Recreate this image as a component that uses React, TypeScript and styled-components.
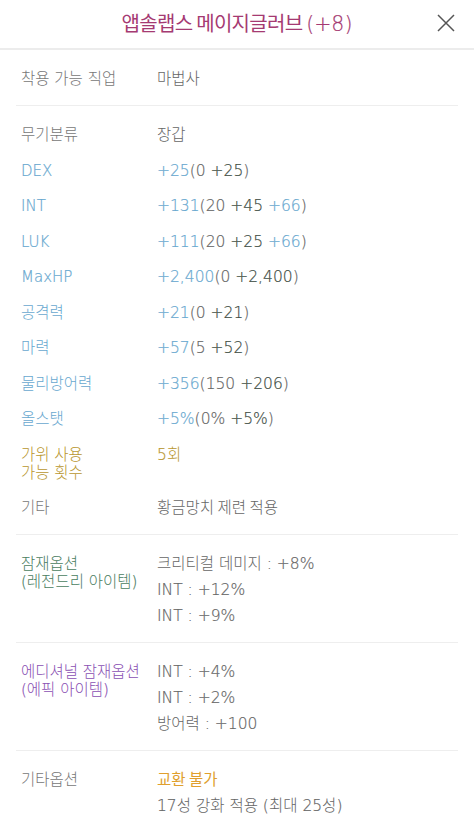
import React from "react";
import styled, { createGlobalStyle } from "styled-components";

const Global = createGlobalStyle`
  html, body { margin: 0; padding: 0; background: #fff; }
  body { font-family: "Noto Sans CJK KR", "Noto Sans", sans-serif; -webkit-font-smoothing: antialiased; }
`;

const Page = styled.div`
  width: 474px;
  height: 825px;
  overflow: hidden;
  background: #fff;
`;

const Header = styled.header`
  height: 48px;
  border-bottom: 2px solid #ececec;
  display: flex;
  align-items: center;
  justify-content: center;
  position: relative;
`;

const Title = styled.h1`
  margin: 0 0 2px 0;
  font-size: 20px;
  line-height: 24px;
  font-weight: 400;
  color: #a53a72;
  letter-spacing: -0.7px;
  white-space: nowrap;
`;

const Close = styled.button`
  position: absolute;
  right: 16px;
  top: 11px;
  width: 24px;
  height: 24px;
  padding: 0;
  border: 0;
  background: none;
  display: flex;
  align-items: center;
  justify-content: center;
`;

const Section = styled.section<{ $last?: boolean }>`
  margin: 0 16px;
  padding: 18px 0 19px 5px;
  border-bottom: ${(p) => (p.$last ? "none" : "1px solid #eeeeee")};
  display: flex;
  flex-direction: column;
  gap: 17.5px;
`;

const Row = styled.div`
  display: grid;
  grid-template-columns: 136px 1fr;
  align-items: start;
  font-size: 15.5px;
  font-weight: 300;
  line-height: 18px;
  letter-spacing: 0;
  white-space: nowrap;
`;

type Tone = "gray" | "blue" | "gold" | "green" | "purple";
const toneColor: Record<Tone, string> = {
  gray: "#777777",
  blue: "#68a8cf",
  gold: "#b8962e",
  green: "#4a7d5f",
  purple: "#8a50b3",
};

const Label = styled.div<{ $tone: Tone }>`
  display: flex;
  flex-direction: column;
  color: ${(p) => toneColor[p.$tone]};
`;

const Line = styled.div`
  height: 18px;
  overflow: visible;
`;

const Values = styled.div`
  display: flex;
  flex-direction: column;
  gap: 8px;
  color: #666666;
`;

const Value = styled.div<{ $color?: string; $strong?: boolean }>`
  height: 18px;
  color: ${(p) => p.$color || "#666666"};
  font-weight: ${(p) => (p.$strong ? 400 : 300)};
`;

/* Latin run: wide, thin geometric-looking latin as in the reference */
const Lat = styled.span<{ $size?: number }>`
  font-family: "DejaVu Sans", "Noto Sans", sans-serif;
  font-weight: 200;
  font-size: ${(p) => p.$size ?? 15.5}px;
  line-height: 1;
  letter-spacing: 0;
  -webkit-text-stroke: 0.2px currentColor;
`;

const Blue = styled.span`
  color: #68a8cf;
`;
const Base = styled.span`
  color: #666666;
`;
const Dark = styled.span`
  color: #3f4e44;
`;

const HANGUL = /([\u1100-\u11ff\u3130-\u318f\uac00-\ud7af]+)/;

const Mixed = ({ text, size }: { text: string; size?: number }) => (
  <>
    {text.split(HANGUL).map((part, i) =>
      part === "" ? null : HANGUL.test(part) ? (
        <React.Fragment key={i}>{part}</React.Fragment>
      ) : (
        <Lat key={i} $size={size}>
          {part}
        </Lat>
      )
    )}
  </>
);

const LabelLines = ({ tone, lines }: { tone: Tone; lines: string[] }) => (
  <Label $tone={tone}>
    {lines.map((l) => (
      <Line key={l}>
        <Mixed text={l} size={15} />
      </Line>
    ))}
  </Label>
);

type Stat = { label: string; total: string; base: string; bonus: string; star?: string };
const stats: Stat[] = [
  { label: "DEX", total: "+25", base: "0", bonus: "+25" },
  { label: "INT", total: "+131", base: "20", bonus: "+45", star: "+66" },
  { label: "LUK", total: "+111", base: "20", bonus: "+25", star: "+66" },
  { label: "MaxHP", total: "+2,400", base: "0", bonus: "+2,400" },
  { label: "공격력", total: "+21", base: "0", bonus: "+21" },
  { label: "마력", total: "+57", base: "5", bonus: "+52" },
  { label: "물리방어력", total: "+356", base: "150", bonus: "+206" },
  { label: "올스탯", total: "+5%", base: "0%", bonus: "+5%" },
];

const CloseIcon = () => (
  <svg width="20" height="20" viewBox="0 0 20 20">
    <path d="M2 2 L18 18 M18 2 L2 18" stroke="#555" strokeWidth="1.5" fill="none" />
  </svg>
);

export default function App() {
  return (
    <Page>
      <Global />
      <Header>
        <Title>
          앱솔랩스 메이지글러브 <Lat $size={20.5}>(+8)</Lat>
        </Title>
        <Close aria-label="닫기">
          <CloseIcon />
        </Close>
      </Header>

      <Section>
        <Row>
          <LabelLines tone="gray" lines={["착용 가능 직업"]} />
          <Values>
            <Value>마법사</Value>
          </Values>
        </Row>
      </Section>

      <Section>
        <Row>
          <LabelLines tone="gray" lines={["무기분류"]} />
          <Values>
            <Value>장갑</Value>
          </Values>
        </Row>
        {stats.map((s) => (
          <Row key={s.label}>
            <LabelLines tone="blue" lines={[s.label]} />
            <Values>
              <Value>
                <Lat>
                  <Blue>{s.total}</Blue>
                  <Base>({s.base} </Base>
                  <Dark>{s.bonus}</Dark>
                  {s.star && (
                    <>
                      {" "}
                      <Blue>{s.star}</Blue>
                    </>
                  )}
                  <Base>)</Base>
                </Lat>
              </Value>
            </Values>
          </Row>
        ))}
        <Row>
          <LabelLines tone="gold" lines={["가위 사용", "가능 횟수"]} />
          <Values>
            <Value $color="#b8962e">
              <Mixed text="5회" />
            </Value>
          </Values>
        </Row>
        <Row>
          <LabelLines tone="gray" lines={["기타"]} />
          <Values>
            <Value>황금망치 제련 적용</Value>
          </Values>
        </Row>
      </Section>

      <Section>
        <Row>
          <LabelLines tone="green" lines={["잠재옵션", "(레전드리 아이템)"]} />
          <Values>
            <Value>
              <Mixed text="크리티컬 데미지 : +8%" />
            </Value>
            <Value>
              <Mixed text="INT : +12%" />
            </Value>
            <Value>
              <Mixed text="INT : +9%" />
            </Value>
          </Values>
        </Row>
      </Section>

      <Section>
        <Row>
          <LabelLines tone="purple" lines={["에디셔널 잠재옵션", "(에픽 아이템)"]} />
          <Values>
            <Value>
              <Mixed text="INT : +4%" />
            </Value>
            <Value>
              <Mixed text="INT : +2%" />
            </Value>
            <Value>
              <Mixed text="방어력 : +100" />
            </Value>
          </Values>
        </Row>
      </Section>

      <Section $last>
        <Row>
          <LabelLines tone="gray" lines={["기타옵션"]} />
          <Values>
            <Value $color="#e09f2e" $strong>
              교환 불가
            </Value>
            <Value>
              <Mixed text="17성 강화 적용 (최대 25성)" />
            </Value>
          </Values>
        </Row>
      </Section>
    </Page>
  );
}
